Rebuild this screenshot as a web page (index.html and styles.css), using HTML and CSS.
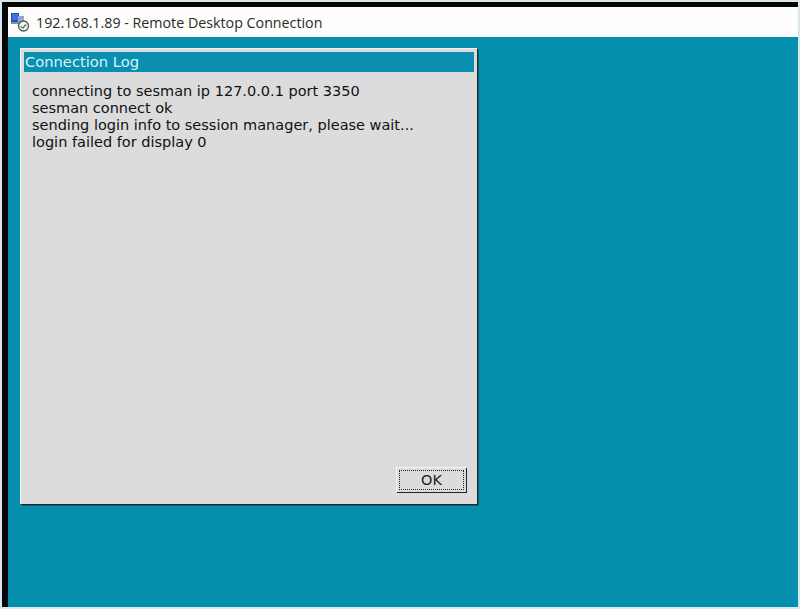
FILE: index.html
```html
<!DOCTYPE html>
<html lang="en">

<head>
    <meta charset="UTF-8">
    <title>192.168.1.89 - Remote Desktop Connection</title>
    <link rel="stylesheet" href="styles.css">
</head>

<body>
    <div class="window">
        <header class="titlebar">
            <svg class="app-icon" width="20" height="20" viewBox="0 0 20 20">
                <rect x="1" y="1" width="8" height="9" fill="#2b4fb5"/>
                <rect x="2" y="2" width="6" height="6" fill="#3f6fe0"/>
                <rect x="8" y="4" width="6" height="8" fill="#8fa6cf"/>
                <rect x="1" y="10" width="10" height="2" fill="#7f8fb0"/>
                <circle cx="13.5" cy="14" r="5" fill="#f4f6f2" stroke="#4d5a50" stroke-width="1.3"/>
                <path d="M10.5 14.5l2.5 1.5 3-3.5" fill="none" stroke="#3f7a4a" stroke-width="1.3"/>
            </svg>
            <span class="titlebar__text">192.168.1.89 - Remote Desktop Connection</span>
        </header>
        <main class="desktop">
            <section class="dialog">
                <h1 class="dialog__title">Connection Log</h1>
                <div class="dialog__body">
                    <p class="log">connecting to sesman ip 127.0.0.1 port 3350</p>
                    <p class="log">sesman connect ok</p>
                    <p class="log">sending login info to session manager, please wait...</p>
                    <p class="log">login failed for display 0</p>
                </div>
                <div class="dialog__footer">
                    <button class="btn" type="button"><span class="btn__label">OK</span></button>
                </div>
            </section>
        </main>
    </div>
</body>

</html>
```

FILE: styles.css
```css
html,
body {
    height: 100%;
}

body {
    margin: 0;
    padding: 2px;
    box-sizing: border-box;
    background-color: #d9e6ea;
    overflow: hidden;
}

.window {
    display: flex;
    flex-direction: column;
    height: 100%;
    box-sizing: border-box;
    border-top: 5px solid #050505;
    border-left: 6px solid #07070c;
}

.titlebar {
    display: flex;
    align-items: center;
    gap: 6px;
    height: 30px;
    padding-left: 2px;
    background-color: #fdfdfb;
    flex: none;
}

.app-icon {
    flex: none;
}

.titlebar__text {
    font-family: "Open Sans", "Noto Sans", sans-serif;
    font-size: 14.25px;
    color: #2a2a2a;
}

.desktop {
    flex: 1;
    padding: 11px 0 0 12px;
    background-color: #048fae;
}

.dialog {
    display: flex;
    flex-direction: column;
    width: 457px;
    height: 456px;
    box-sizing: border-box;
    padding: 3px;
    background-color: #dcdcdc;
    border-top: 1px solid #f2f2f2;
    border-left: 1px solid #f2f2f2;
    box-shadow: 1px 1px 0 #1c2b30, 2px 2px 0 rgba(20, 50, 60, .5);
}

.dialog__title {
    margin: 0;
    height: 20px;
    padding-left: 1px;
    background-color: #0a8fb1;
    color: #d8f4f6;
    font-family: "DejaVu Sans", sans-serif;
    font-size: 14.7px;
    font-weight: normal;
    line-height: 20px;
}

.dialog__body {
    flex: 1;
    padding: 11px 8px;
}

.log {
    margin: 0;
    font-family: "DejaVu Sans", sans-serif;
    font-size: 14.5px;
    line-height: 17px;
    color: #111;
}

.dialog__footer {
    display: flex;
    justify-content: flex-end;
    padding: 0 8px 9px 0;
}

.btn {
    width: 70px;
    height: 25px;
    padding: 2px;
    background-color: #dcdcdc;
    border: 0;
    border-top: 1px solid #f5f5f5;
    border-left: 1px solid #f5f5f5;
    box-shadow: 1px 1px 0 #222;
}

.btn__label {
    display: block;
    height: 100%;
    box-sizing: border-box;
    border: 1px dotted #222;
    font-family: "DejaVu Sans", sans-serif;
    font-size: 14.5px;
    line-height: 18px;
    color: #222;
}
```
